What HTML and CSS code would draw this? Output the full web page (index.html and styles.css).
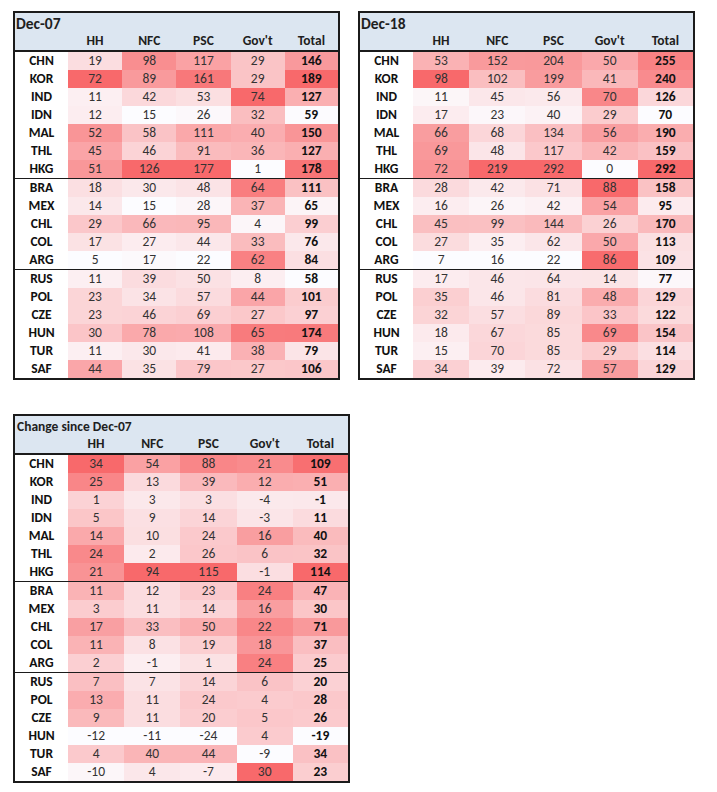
FILE: index.html
```html
<!DOCTYPE html>
<html>
<head>
<meta charset="utf-8">
<link rel="stylesheet" href="styles.css">
<script src="script.js" defer></script>
</head>
<body>
<div class="page">
  <div class="top">
    <table class="heat t1">
      <colgroup><col class="lab"><col><col><col><col><col></colgroup>
      <thead>
        <tr class="title big"><th colspan="6">Dec-07</th></tr>
        <tr class="cols"><th></th><th>HH</th><th>NFC</th><th>PSC</th><th>Gov't</th><th>Total</th></tr>
      </thead>
      <tbody>
        <tr><th>CHN</th><td>19</td><td>98</td><td>117</td><td>29</td><td class="tot">146</td></tr>
        <tr><th>KOR</th><td>72</td><td>89</td><td>161</td><td>29</td><td class="tot">189</td></tr>
        <tr><th>IND</th><td>11</td><td>42</td><td>53</td><td>74</td><td class="tot">127</td></tr>
        <tr><th>IDN</th><td>12</td><td>15</td><td>26</td><td>32</td><td class="tot">59</td></tr>
        <tr><th>MAL</th><td>52</td><td>58</td><td>111</td><td>40</td><td class="tot">150</td></tr>
        <tr><th>THL</th><td>45</td><td>46</td><td>91</td><td>36</td><td class="tot">127</td></tr>
        <tr><th>HKG</th><td>51</td><td>126</td><td>177</td><td>1</td><td class="tot">178</td></tr>
        <tr class="sep"><th>BRA</th><td>18</td><td>30</td><td>48</td><td>64</td><td class="tot">111</td></tr>
        <tr><th>MEX</th><td>14</td><td>15</td><td>28</td><td>37</td><td class="tot">65</td></tr>
        <tr><th>CHL</th><td>29</td><td>66</td><td>95</td><td>4</td><td class="tot">99</td></tr>
        <tr><th>COL</th><td>17</td><td>27</td><td>44</td><td>33</td><td class="tot">76</td></tr>
        <tr><th>ARG</th><td>5</td><td>17</td><td>22</td><td>62</td><td class="tot">84</td></tr>
        <tr class="sep"><th>RUS</th><td>11</td><td>39</td><td>50</td><td>8</td><td class="tot">58</td></tr>
        <tr><th>POL</th><td>23</td><td>34</td><td>57</td><td>44</td><td class="tot">101</td></tr>
        <tr><th>CZE</th><td>23</td><td>46</td><td>69</td><td>27</td><td class="tot">97</td></tr>
        <tr><th>HUN</th><td>30</td><td>78</td><td>108</td><td>65</td><td class="tot">174</td></tr>
        <tr><th>TUR</th><td>11</td><td>30</td><td>41</td><td>38</td><td class="tot">79</td></tr>
        <tr><th>SAF</th><td>44</td><td>35</td><td>79</td><td>27</td><td class="tot">106</td></tr>
      </tbody>
    </table>

    <table class="heat t2">
      <colgroup><col class="lab"><col><col><col><col><col></colgroup>
      <thead>
        <tr class="title big"><th colspan="6">Dec-18</th></tr>
        <tr class="cols"><th></th><th>HH</th><th>NFC</th><th>PSC</th><th>Gov't</th><th>Total</th></tr>
      </thead>
      <tbody>
        <tr><th>CHN</th><td>53</td><td>152</td><td>204</td><td>50</td><td class="tot">255</td></tr>
        <tr><th>KOR</th><td>98</td><td>102</td><td>199</td><td>41</td><td class="tot">240</td></tr>
        <tr><th>IND</th><td>11</td><td>45</td><td>56</td><td>70</td><td class="tot">126</td></tr>
        <tr><th>IDN</th><td>17</td><td>23</td><td>40</td><td>29</td><td class="tot">70</td></tr>
        <tr><th>MAL</th><td>66</td><td>68</td><td>134</td><td>56</td><td class="tot">190</td></tr>
        <tr><th>THL</th><td>69</td><td>48</td><td>117</td><td>42</td><td class="tot">159</td></tr>
        <tr><th>HKG</th><td>72</td><td>219</td><td>292</td><td>0</td><td class="tot">292</td></tr>
        <tr class="sep"><th>BRA</th><td>28</td><td>42</td><td>71</td><td>88</td><td class="tot">158</td></tr>
        <tr><th>MEX</th><td>16</td><td>26</td><td>42</td><td>54</td><td class="tot">95</td></tr>
        <tr><th>CHL</th><td>45</td><td>99</td><td>144</td><td>26</td><td class="tot">170</td></tr>
        <tr><th>COL</th><td>27</td><td>35</td><td>62</td><td>50</td><td class="tot">113</td></tr>
        <tr><th>ARG</th><td>7</td><td>16</td><td>22</td><td>86</td><td class="tot">109</td></tr>
        <tr class="sep"><th>RUS</th><td>17</td><td>46</td><td>64</td><td>14</td><td class="tot">77</td></tr>
        <tr><th>POL</th><td>35</td><td>46</td><td>81</td><td>48</td><td class="tot">129</td></tr>
        <tr><th>CZE</th><td>32</td><td>57</td><td>89</td><td>33</td><td class="tot">122</td></tr>
        <tr><th>HUN</th><td>18</td><td>67</td><td>85</td><td>69</td><td class="tot">154</td></tr>
        <tr><th>TUR</th><td>15</td><td>70</td><td>85</td><td>29</td><td class="tot">114</td></tr>
        <tr><th>SAF</th><td>34</td><td>39</td><td>72</td><td>57</td><td class="tot">129</td></tr>
      </tbody>
    </table>
  </div>

  <table class="heat t3">
    <colgroup><col class="lab"><col><col><col><col><col></colgroup>
    <thead>
      <tr class="title"><th colspan="6">Change since Dec-07</th></tr>
      <tr class="cols"><th></th><th>HH</th><th>NFC</th><th>PSC</th><th>Gov't</th><th>Total</th></tr>
    </thead>
    <tbody>
      <tr><th>CHN</th><td>34</td><td>54</td><td>88</td><td>21</td><td class="tot">109</td></tr>
      <tr><th>KOR</th><td>25</td><td>13</td><td>39</td><td>12</td><td class="tot">51</td></tr>
      <tr><th>IND</th><td>1</td><td>3</td><td>3</td><td>-4</td><td class="tot">-1</td></tr>
      <tr><th>IDN</th><td>5</td><td>9</td><td>14</td><td>-3</td><td class="tot">11</td></tr>
      <tr><th>MAL</th><td>14</td><td>10</td><td>24</td><td>16</td><td class="tot">40</td></tr>
      <tr><th>THL</th><td>24</td><td>2</td><td>26</td><td>6</td><td class="tot">32</td></tr>
      <tr><th>HKG</th><td>21</td><td>94</td><td>115</td><td>-1</td><td class="tot">114</td></tr>
      <tr class="sep"><th>BRA</th><td>11</td><td>12</td><td>23</td><td>24</td><td class="tot">47</td></tr>
      <tr><th>MEX</th><td>3</td><td>11</td><td>14</td><td>16</td><td class="tot">30</td></tr>
      <tr><th>CHL</th><td>17</td><td>33</td><td>50</td><td>22</td><td class="tot">71</td></tr>
      <tr><th>COL</th><td>11</td><td>8</td><td>19</td><td>18</td><td class="tot">37</td></tr>
      <tr><th>ARG</th><td>2</td><td>-1</td><td>1</td><td>24</td><td class="tot">25</td></tr>
      <tr class="sep"><th>RUS</th><td>7</td><td>7</td><td>14</td><td>6</td><td class="tot">20</td></tr>
      <tr><th>POL</th><td>13</td><td>11</td><td>24</td><td>4</td><td class="tot">28</td></tr>
      <tr><th>CZE</th><td>9</td><td>11</td><td>20</td><td>5</td><td class="tot">26</td></tr>
      <tr><th>HUN</th><td>-12</td><td>-11</td><td>-24</td><td>4</td><td class="tot">-19</td></tr>
      <tr><th>TUR</th><td>4</td><td>40</td><td>44</td><td>-9</td><td class="tot">34</td></tr>
      <tr><th>SAF</th><td>-10</td><td>4</td><td>-7</td><td>30</td><td class="tot">23</td></tr>
    </tbody>
  </table>
</div>
</body>
</html>
```

FILE: styles.css
```css
html, body {
  margin: 0;
  padding: 0;
  background: #ffffff;
}

.page {
  padding: 11px 0 0 13px;
  font-family: Carlito, Lato, "Open Sans", sans-serif;
  font-size: 13.5px;
  color: #333333;
}

.top {
  display: flex;
  align-items: flex-start;
  gap: 18px;
}

.heat {
  border-collapse: collapse;
  table-layout: fixed;
  border: 2px solid #1b1b1b;
  background: #ffffff;
}

.t1 { width: 327px; }
.t2 { width: 337px; }
.t3 { width: 337px; margin-top: 34px; }

.heat col.lab { width: 54px; }

.heat th,
.heat td {
  padding: 0;
  height: 18px;
  line-height: 18px;
  text-align: center;
  white-space: nowrap;
}

.heat thead tr {
  background: #dce6f1;
}

.heat thead th {
  font-weight: 700;
  color: #1f1f1f;
}

.heat .title th {
  text-align: left;
  padding-left: 2px;
  line-height: 17px;
  vertical-align: top;
  padding-top: 2px;
  height: 16px;
}

.heat .title.big th {
  font-size: 15.5px;
  padding-left: 1px;
}

.heat .cols th {
  border-bottom: 2px solid #1b1b1b;
}

.heat tbody th {
  font-weight: 700;
  color: #111111;
  background: #ffffff;
}

.heat td.tot {
  font-weight: 700;
  color: #111111;
}

.heat tr.sep th,
.heat tr.sep td {
  border-top: 1.5px solid #1b1b1b;
}
```

FILE: script.js
```js
document.querySelectorAll('table.heat').forEach(function (table) {
  var rows = Array.prototype.slice.call(table.tBodies[0].rows);
  for (var c = 1; c <= 5; c++) {
    var cells = rows.map(function (r) { return r.cells[c]; });
    var vals = cells.map(function (td) { return parseFloat(td.textContent); });
    var mn = Math.min.apply(null, vals);
    var mx = Math.max.apply(null, vals);
    cells.forEach(function (td, i) {
      var f = mx === mn ? 0 : (vals[i] - mn) / (mx - mn);
      var r = Math.round(252 + (248 - 252) * f);
      var g = Math.round(252 + (105 - 252) * f);
      var b = Math.round(255 + (107 - 255) * f);
      td.style.backgroundColor = 'rgb(' + r + ',' + g + ',' + b + ')';
    });
  }
});
```
